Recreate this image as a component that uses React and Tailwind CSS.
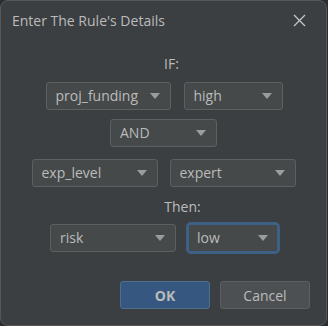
import React from "react";

const font = { fontFamily: '"Open Sans", "Noto Sans", sans-serif' };

function Select({ value, w, focused }) {
  if (focused) {
    return (
      <div className={`${w} h-[32px] rounded-[5px] border-[3px] border-[#3d6185] flex`}>
        <div className="flex-1 rounded-[3px] bg-[#45494a] flex items-center justify-between pl-[8px] pr-[9px]">
          <span className="text-[14px] text-[#bbbbbb] leading-none">{value}</span>
          <Arrow />
        </div>
      </div>
    );
  }
  return (
    <div className={`${w} h-[28px] rounded-[3px] border border-[#5e6060] bg-[#45494a] flex items-center justify-between pl-[9px] pr-[10px]`}>
      <span className="text-[14px] text-[#bbbbbb] leading-none">{value}</span>
      <Arrow />
    </div>
  );
}

function Arrow() {
  return (
    <svg width="10" height="6" viewBox="0 0 10 6">
      <path d="M0 0 L10 0 L5 6 Z" fill="#9a9da0" />
    </svg>
  );
}

export default function App() {
  return (
    <div className="w-[328px] h-[326px] bg-[#2b2d30]" style={font}>
      <div className="w-[327px] h-[326px] bg-[#3c3f41] border border-[#555759] rounded-[8px] flex flex-col">
        <div className="h-[38px] flex items-center justify-between pl-[11px] pr-[20px] pt-[1px]">
          <span className="text-[14px] text-[#bbbbbb]">Enter The Rule's Details</span>
          <svg width="13" height="13" viewBox="0 0 13 13">
            <path d="M1 1 L12 12 M12 1 L1 12" stroke="#c4c4c4" strokeWidth="1.3" />
          </svg>
        </div>
        <div className="flex flex-col items-center pt-[15px]">
          <div className="text-[14px] text-[#bbbbbb] h-[20px] leading-[20px] ml-[16px]">IF:</div>
          <div className="flex gap-[13px] mt-[8px] ml-[1px]">
            <Select value="proj_funding" w="w-[125px]" />
            <Select value="high" w="w-[99px]" />
          </div>
          <div className="flex mt-[9px]">
            <Select value="AND" w="w-[107px]" />
          </div>
          <div className="flex gap-[12px] mt-[12px]">
            <Select value="exp_level" w="w-[126px]" />
            <Select value="expert" w="w-[126px]" />
          </div>
          <div className="text-[14px] text-[#bbbbbb] h-[20px] leading-[20px] mt-[10px] ml-[38px]">Then:</div>
          <div className="flex items-center gap-[10px] mt-[5px] ml-[3px]">
            <Select value="risk" w="w-[126px]" />
            <Select value="low" w="w-[94px]" focused />
          </div>
        </div>
        <div className="flex justify-end gap-[10px] pr-[16px] mt-[27px]">
          <div className="w-[90px] h-[28px] rounded-[3px] border border-[#4c708c] bg-[#365880] flex items-center justify-center">
            <span className="text-[14px] font-bold text-[#bbbbbb]">OK</span>
          </div>
          <div className="w-[90px] h-[28px] rounded-[3px] border border-[#5e6060] bg-[#4c5052] flex items-center justify-center">
            <span className="text-[14px] text-[#bbbbbb]">Cancel</span>
          </div>
        </div>
      </div>
    </div>
  );
}
